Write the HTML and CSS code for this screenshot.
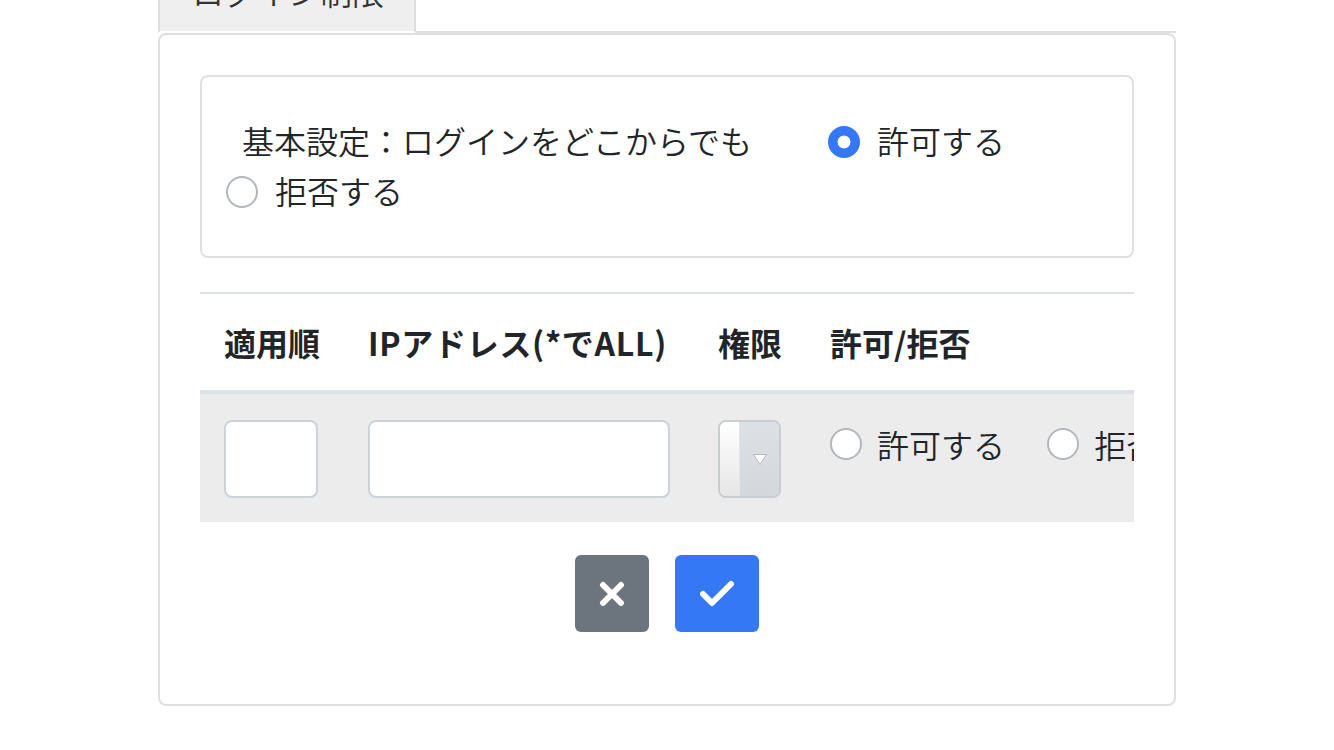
FILE: index.html
```html
<!DOCTYPE html>
<html lang="ja">
<head>
<meta charset="utf-8">
<title>ログイン制限</title>
<link rel="stylesheet" href="styles.css">
</head>
<body>
<div class="container">
  <div class="tabbar">
    <div class="tab">ログイン制限</div>
  </div>
  <div class="panel">
    <div class="basic">
      <span class="basic-label">基本設定：ログインをどこからでも</span>
      <label class="opt opt-first"><span class="radio checked"></span><span class="opt-text">許可する</span></label>
      <label class="opt"><span class="radio"></span><span class="opt-text">拒否する</span></label>
    </div>
    <div class="table-wrap">
      <table class="rules">
        <thead>
          <tr>
            <th>適用順</th>
            <th class="th-ip">IPアドレス(*でALL)</th>
            <th>権限</th>
            <th>許可/拒否</th>
          </tr>
        </thead>
        <tbody>
          <tr>
            <td><span class="input input-order"></span></td>
            <td><span class="input input-ip"></span></td>
            <td>
              <span class="select">
                <span class="select-left"></span>
                <span class="select-right">
                  <svg width="16" height="13" viewBox="0 0 16 13"><path d="M1.5 1.5 H14.5 L8 11.5 Z" fill="#ffffff" stroke="#b5b9bf" stroke-width="1"/></svg>
                </span>
              </span>
            </td>
            <td class="radios">
              <label class="opt opt-row"><span class="radio"></span><span class="opt-text">許可する</span></label>
              <label class="opt opt-row"><span class="radio"></span><span class="opt-text">拒否する</span></label>
            </td>
          </tr>
        </tbody>
      </table>
    </div>
    <div class="actions">
      <button class="btn btn-cancel" type="button" aria-label="cancel">
        <svg width="26" height="26" viewBox="0 0 26 26"><path d="M4 4 L22 22 M22 4 L4 22" stroke="#ffffff" stroke-width="6" stroke-linecap="round"/></svg>
      </button>
      <button class="btn btn-ok" type="button" aria-label="ok">
        <svg width="36" height="28" viewBox="0 0 36 28"><path d="M4 14 L13 23 L32 4" fill="none" stroke="#ffffff" stroke-width="6" stroke-linecap="round" stroke-linejoin="round"/></svg>
      </button>
    </div>
  </div>
</div>
</body>
</html>
```

FILE: styles.css
```css
* { box-sizing: border-box; }

html, body {
  margin: 0;
  padding: 0;
  background: #ffffff;
}

body {
  font-family: "Noto Sans CJK JP", "Noto Sans", sans-serif;
  font-size: 32px;
  font-weight: 350;
  line-height: 48px;
  color: #212529;
  overflow: hidden;
}

.container {
  width: 1018px;
  margin: -51px auto 0;
}

.tabbar {
  display: flex;
  border-bottom: 2px solid #dee2e6;
}

.tab {
  background: #efefef;
  border: 2px solid #dddddd;
  border-bottom: 2px solid #ffffff;
  border-radius: 8px 8px 0 0;
  padding: 16px 32px;
  margin-bottom: -2px;
  color: #333333;
  width: 258px;
  white-space: nowrap;
}

.panel {
  border: 2px solid #dfdfdf;
  border-radius: 8px;
  padding: 40px 40px 40px;
}

.basic {
  border: 2px solid #e0e0e0;
  border-radius: 8px;
  padding: 38px 24px 41px;
  display: flex;
  flex-wrap: wrap;
  align-items: center;
  line-height: 50px;
  margin-bottom: 34px;
}

.basic-label {
  margin-left: 16px;
  margin-right: 76px;
  white-space: nowrap;
}

.opt {
  display: inline-flex;
  align-items: center;
  white-space: nowrap;
}

.opt-first { margin-right: 24px; }

.radio {
  width: 32px;
  height: 32px;
  border: 2px solid #b3b7bd;
  border-radius: 50%;
  background: #ffffff;
  margin-right: 17px;
  flex: none;
}

.basic .radio {
  position: relative;
  top: 2px;
}

.radio.checked {
  border-color: #3478f6;
  background: radial-gradient(circle, #ffffff 0 6px, #3478f6 6.8px);
}

.table-wrap {
  width: 934px;
  overflow: hidden;
}

.rules {
  border-collapse: collapse;
  white-space: nowrap;
}

.rules th {
  font-weight: 700;
  text-align: left;
  padding: 24px 24px;
  border-top: 2px solid #dee2e6;
  border-bottom: 4px solid #dee2e6;
  vertical-align: top;
}

.rules .th-ip { letter-spacing: 0.7px; }

.rules td {
  background: #ececec;
  padding: 26px 24px 24px;
  vertical-align: top;
}

.input {
  display: block;
  height: 78px;
  background: #ffffff;
  border: 2px solid #ced2d8;
  border-radius: 8px;
}

.input-order { width: 94px; }
.input-ip { width: 302px; }

.select {
  display: flex;
  width: 63px;
  height: 78px;
  border: 2px solid #c9cdd3;
  border-radius: 8px;
  overflow: hidden;
}

.select-left {
  width: 20px;
  background: linear-gradient(#ffffff, #e6e6e6);
  border-right: 1px solid #e3e5e8;
}

.select-right {
  flex: 1;
  display: flex;
  align-items: center;
  justify-content: center;
  background: linear-gradient(#dde0e5, #d4d7dc);
}

.radios .radio { margin-right: 15px; }
.radios .opt-row { margin-right: 35px; }

.actions {
  display: flex;
  justify-content: center;
  gap: 26px;
  margin-top: 33px;
  margin-bottom: 32px;
}

.btn {
  height: 77px;
  border: none;
  border-radius: 6px;
  display: flex;
  align-items: center;
  justify-content: center;
  padding: 0;
}

.btn-cancel {
  width: 74px;
  background: #6c757d;
}

.btn-ok {
  width: 84px;
  background: #3478f6;
}
```
